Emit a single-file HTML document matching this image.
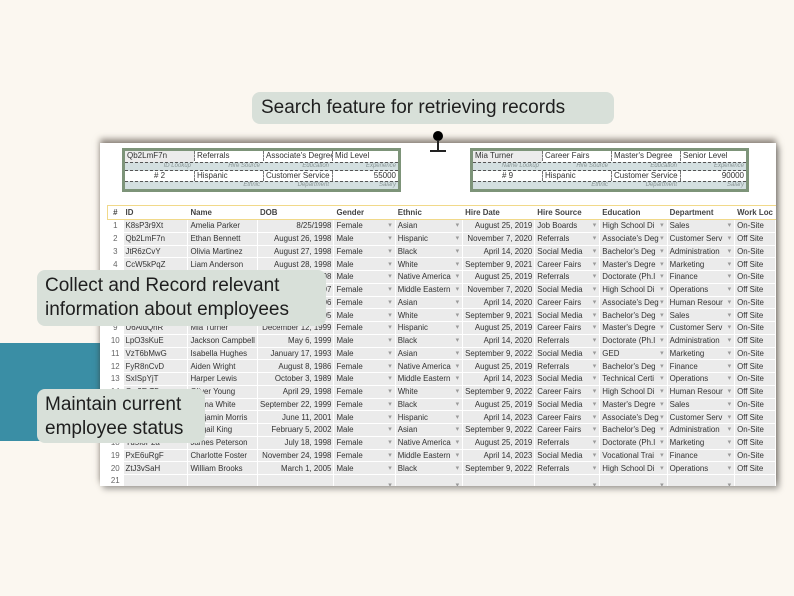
<!DOCTYPE html>
<html><head><meta charset="utf-8"><style>
*{margin:0;padding:0;box-sizing:border-box}
body{width:794px;height:596px;background:#fbf7f0;position:relative;overflow:hidden;font-family:"Liberation Sans",sans-serif}
.teal{position:absolute;left:0;top:343px;width:100px;height:98px;background:#3a8ea5}
.panel{position:absolute;left:100px;top:143px;width:676px;height:343px;background:#fff;box-shadow:0 -4px 6px rgba(60,50,40,.55),3px 3px 6px rgba(0,0,0,.35);overflow:hidden}
.bubble{position:absolute;background:#d8e0d9;border-radius:8px;color:#1e1e1e;font-size:19px;line-height:24px;padding:4px 8px}
.lk{position:absolute;top:5px;border:3px solid #7d9479;background:#fff;width:279px;height:44px}
.lk div{position:absolute;font-size:8px;line-height:10px;white-space:nowrap;overflow:hidden;color:#333}
.lk .lb{background:#d3dfe0;font-style:italic;font-size:6px;color:#8a9696;line-height:7px}
table{position:absolute;left:7px;top:62px;border-collapse:collapse;table-layout:fixed;font-size:7.9px;color:#333}
td{height:12.75px;border:1px dashed #fff;border-bottom:1px solid #fff;background:#ebebeb;padding:0 2px;white-space:nowrap;overflow:hidden;position:relative}
td.n{background:#fff;color:#666;text-align:center;border-color:#fff}
td.r{text-align:right}
td.d::after{content:"▾";position:absolute;right:3px;color:#999;font-size:7px}
tr.h td{background:#fff;font-weight:bold;color:#444;height:14px;border-top:1.5px solid #f1d98a;border-bottom:1.5px solid #f1d98a;border-left:1px dashed #ccc}
</style></head><body>
<div class="teal"></div>
<div class="panel">
 <div class="lk" style="left:22px">
  <div style="left:0;top:0;width:69px;height:11px;background:#ececec;padding:0 2px">Qb2LmF7n</div>
  <div style="left:69px;top:0;width:69px;padding:0 2px;border-left:1px dashed #777">Referrals</div>
  <div style="left:138px;top:0;width:69px;padding:0 2px;border-left:1px dashed #777">Associate's Degree</div>
  <div style="left:207px;top:0;width:69px;padding:0 2px;border-left:1px dashed #777">Mid Level</div>
  <div class="lb" style="left:0;top:11px;width:273px;height:9px;border-top:1px dashed #555;border-bottom:1px dashed #555"><span style="position:absolute;right:207px">ID Lookup</span><span style="position:absolute;right:138px">Hire Source</span><span style="position:absolute;right:69px">Education</span><span style="position:absolute;right:2px">Experience</span></div>
  <div style="left:0;top:20px;width:69px;text-align:center;padding:0 1px">#&nbsp;2</div>
  <div style="left:69px;top:20px;width:69px;padding:0 2px;border-left:1px dashed #777">Hispanic</div>
  <div style="left:138px;top:20px;width:69px;padding:0 2px;border-left:1px dashed #777">Customer Service</div>
  <div style="left:207px;top:20px;width:66px;padding:0 2px;text-align:right;border-left:1px dashed #777">55000</div>
  <div class="lb" style="left:0;top:30px;width:273px;height:8px;border-top:1px dashed #555"><span style="position:absolute;right:138px">Ethnic</span><span style="position:absolute;right:69px">Department</span><span style="position:absolute;right:2px">Salary</span></div>
 </div>
 <div class="lk" style="left:370px">
  <div style="left:0;top:0;width:69px;height:11px;background:#ececec;padding:0 2px">Mia Turner</div>
  <div style="left:69px;top:0;width:69px;padding:0 2px;border-left:1px dashed #777">Career Fairs</div>
  <div style="left:138px;top:0;width:69px;padding:0 2px;border-left:1px dashed #777">Master's Degree</div>
  <div style="left:207px;top:0;width:69px;padding:0 2px;border-left:1px dashed #777">Senior Level</div>
  <div class="lb" style="left:0;top:11px;width:273px;height:9px;border-top:1px dashed #555;border-bottom:1px dashed #555"><span style="position:absolute;right:207px">Name Lookup</span><span style="position:absolute;right:138px">Hire Source</span><span style="position:absolute;right:69px">Education</span><span style="position:absolute;right:2px">Experience</span></div>
  <div style="left:0;top:20px;width:69px;text-align:center;padding:0 1px">#&nbsp;9</div>
  <div style="left:69px;top:20px;width:69px;padding:0 2px;border-left:1px dashed #777">Hispanic</div>
  <div style="left:138px;top:20px;width:69px;padding:0 2px;border-left:1px dashed #777">Customer Service</div>
  <div style="left:207px;top:20px;width:66px;padding:0 2px;text-align:right;border-left:1px dashed #777">90000</div>
  <div class="lb" style="left:0;top:30px;width:273px;height:8px;border-top:1px dashed #555"><span style="position:absolute;right:138px">Ethnic</span><span style="position:absolute;right:69px">Department</span><span style="position:absolute;right:2px">Salary</span></div>
 </div>
 <table>
 <colgroup><col style="width:16px"><col style="width:70px"><col style="width:69px"><col style="width:69px"><col style="width:69px"><col style="width:70px"><col style="width:70px"><col style="width:69px"><col style="width:69px"><col style="width:70px"><col style="width:40px"></colgroup>
 <tr class="h"><td class="n" style="border-left:1.5px solid #f1d98a">#</td><td>ID</td><td>Name</td><td>DOB</td><td>Gender</td><td>Ethnic</td><td>Hire Date</td><td>Hire Source</td><td>Education</td><td>Department</td><td>Work Loc</td></tr>
 <tr><td class="n">1</td><td>K8sP3r9Xt</td><td>Amelia Parker</td><td class="r">8/25/1998</td><td class="d">Female</td><td class="d">Asian</td><td class="r">August 25, 2019</td><td class="d">Job Boards</td><td class="d">High School Di</td><td class="d">Sales</td><td>On-Site</td></tr>
 <tr><td class="n">2</td><td>Qb2LmF7n</td><td>Ethan Bennett</td><td class="r">August 26, 1998</td><td class="d">Male</td><td class="d">Hispanic</td><td class="r">November 7, 2020</td><td class="d">Referrals</td><td class="d">Associate's Deg</td><td class="d">Customer Serv</td><td>Off Site</td></tr>
 <tr><td class="n">3</td><td>JtR6zCvY</td><td>Olivia Martinez</td><td class="r">August 27, 1998</td><td class="d">Female</td><td class="d">Black</td><td class="r">April 14, 2020</td><td class="d">Social Media</td><td class="d">Bachelor's Deg</td><td class="d">Administration</td><td>On-Site</td></tr>
 <tr><td class="n">4</td><td>CcW5kPqZ</td><td>Liam Anderson</td><td class="r">August 28, 1998</td><td class="d">Male</td><td class="d">White</td><td class="r">September 9, 2021</td><td class="d">Career Fairs</td><td class="d">Master's Degre</td><td class="d">Marketing</td><td>Off Site</td></tr>
 <tr><td class="n">5</td><td>Nh4QwE8r</td><td>Noah Thompson</td><td class="r">August 29, 1998</td><td class="d">Male</td><td class="d">Native America</td><td class="r">August 25, 2019</td><td class="d">Referrals</td><td class="d">Doctorate (Ph.I</td><td class="d">Finance</td><td>On-Site</td></tr>
 <tr><td class="n">6</td><td>Ra7TyU2i</td><td>Sophia Clark</td><td class="r">March 14, 1997</td><td class="d">Female</td><td class="d">Middle Eastern</td><td class="r">November 7, 2020</td><td class="d">Social Media</td><td class="d">High School Di</td><td class="d">Operations</td><td>Off Site</td></tr>
 <tr><td class="n">7</td><td>Gm5HjK1o</td><td>Ava Robinson</td><td class="r">May 2, 1996</td><td class="d">Female</td><td class="d">Asian</td><td class="r">April 14, 2020</td><td class="d">Career Fairs</td><td class="d">Associate's Deg</td><td class="d">Human Resour</td><td>On-Site</td></tr>
 <tr><td class="n">8</td><td>Wd9XcV3b</td><td>Lucas Hall</td><td class="r">July 9, 1995</td><td class="d">Male</td><td class="d">White</td><td class="r">September 9, 2021</td><td class="d">Social Media</td><td class="d">Bachelor's Deg</td><td class="d">Sales</td><td>Off Site</td></tr>
 <tr><td class="n">9</td><td>U6AldQhR</td><td>Mia Turner</td><td class="r">December 12, 1999</td><td class="d">Female</td><td class="d">Hispanic</td><td class="r">August 25, 2019</td><td class="d">Career Fairs</td><td class="d">Master's Degre</td><td class="d">Customer Serv</td><td>On-Site</td></tr>
 <tr><td class="n">10</td><td>LpO3sKuE</td><td>Jackson Campbell</td><td class="r">May 6, 1999</td><td class="d">Male</td><td class="d">Black</td><td class="r">April 14, 2020</td><td class="d">Referrals</td><td class="d">Doctorate (Ph.I</td><td class="d">Administration</td><td>Off Site</td></tr>
 <tr><td class="n">11</td><td>VzT6bMwG</td><td>Isabella Hughes</td><td class="r">January 17, 1993</td><td class="d">Male</td><td class="d">Asian</td><td class="r">September 9, 2022</td><td class="d">Social Media</td><td class="d">GED</td><td class="d">Marketing</td><td>On-Site</td></tr>
 <tr><td class="n">12</td><td>FyR8nCvD</td><td>Aiden Wright</td><td class="r">August 8, 1986</td><td class="d">Female</td><td class="d">Native America</td><td class="r">August 25, 2019</td><td class="d">Referrals</td><td class="d">Bachelor's Deg</td><td class="d">Finance</td><td>Off Site</td></tr>
 <tr><td class="n">13</td><td>SxISpYjT</td><td>Harper Lewis</td><td class="r">October 3, 1989</td><td class="d">Male</td><td class="d">Middle Eastern</td><td class="r">April 14, 2023</td><td class="d">Social Media</td><td class="d">Technical Certi</td><td class="d">Operations</td><td>On-Site</td></tr>
 <tr><td class="n">14</td><td>Qw2ErT5y</td><td>Oliver Young</td><td class="r">April 29, 1998</td><td class="d">Female</td><td class="d">White</td><td class="r">September 9, 2022</td><td class="d">Career Fairs</td><td class="d">High School Di</td><td class="d">Human Resour</td><td>Off Site</td></tr>
 <tr><td class="n">15</td><td>Bn6MkL9p</td><td>Emma White</td><td class="r">September 22, 1999</td><td class="d">Female</td><td class="d">Black</td><td class="r">August 25, 2019</td><td class="d">Social Media</td><td class="d">Master's Degre</td><td class="d">Sales</td><td>On-Site</td></tr>
 <tr><td class="n">16</td><td>Hj3KlZ7x</td><td>Benjamin Morris</td><td class="r">June 11, 2001</td><td class="d">Male</td><td class="d">Hispanic</td><td class="r">April 14, 2023</td><td class="d">Career Fairs</td><td class="d">Associate's Deg</td><td class="d">Customer Serv</td><td>Off Site</td></tr>
 <tr><td class="n">17</td><td>Tc8VbN4m</td><td>Abigail King</td><td class="r">February 5, 2002</td><td class="d">Male</td><td class="d">Asian</td><td class="r">September 9, 2022</td><td class="d">Career Fairs</td><td class="d">Bachelor's Deg</td><td class="d">Administration</td><td>On-Site</td></tr>
 <tr><td class="n">18</td><td>Yu5IoP2a</td><td>James Peterson</td><td class="r">July 18, 1998</td><td class="d">Female</td><td class="d">Native America</td><td class="r">August 25, 2019</td><td class="d">Referrals</td><td class="d">Doctorate (Ph.I</td><td class="d">Marketing</td><td>Off Site</td></tr>
 <tr><td class="n">19</td><td>PxE6uRgF</td><td>Charlotte Foster</td><td class="r">November 24, 1998</td><td class="d">Female</td><td class="d">Middle Eastern</td><td class="r">April 14, 2023</td><td class="d">Social Media</td><td class="d">Vocational Trai</td><td class="d">Finance</td><td>On-Site</td></tr>
 <tr><td class="n">20</td><td>ZtJ3vSaH</td><td>William Brooks</td><td class="r">March 1, 2005</td><td class="d">Male</td><td class="d">Black</td><td class="r">September 9, 2022</td><td class="d">Referrals</td><td class="d">High School Di</td><td class="d">Operations</td><td>Off Site</td></tr>
 <tr><td class="n">21</td><td></td><td></td><td></td><td class="d"></td><td class="d"></td><td></td><td class="d"></td><td class="d"></td><td class="d"></td><td></td></tr>
 </table>
</div>
<div style="position:absolute;left:433px;top:131px;width:10px;height:10px;border-radius:50%;background:#000"></div>
<div style="position:absolute;left:437px;top:140px;width:1.5px;height:11px;background:#222"></div>
<div style="position:absolute;left:430px;top:150px;width:16px;height:1.5px;background:#222"></div>
<div class="bubble" style="left:252px;top:92px;width:362px;height:32px;padding-left:9px">Search feature for retrieving records</div>
<div class="bubble" style="left:37px;top:270px;width:289px;height:56px;padding-left:8px">Collect and Record relevant<br>information about employees</div>
<div class="bubble" style="left:37px;top:389px;width:168px;height:54px;padding-left:8px">Maintain current<br>employee status</div>
</body></html>
